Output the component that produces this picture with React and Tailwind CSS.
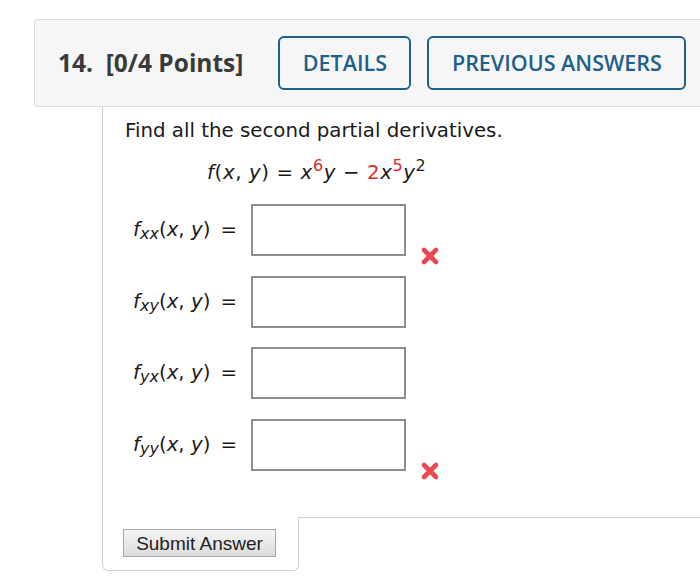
import React from 'react';

const math = { fontFamily: '"DejaVu Sans", Verdana, sans-serif' };

function CrossMark() {
  return (
    <svg width="20" height="20" viewBox="0 0 20 20" className="shrink-0">
      <path d="M4 4 L16 16 M16 4 L4 16" stroke="#ea4750" strokeWidth="4.6" strokeLinecap="round" />
    </svg>
  );
}

function Label({ sub }) {
  return (
    <span className="whitespace-nowrap">
      <i>f</i>
      <sub className="text-[16px] italic relative top-[3px]">{sub}</sub>
      (<i>x</i>, <i>y</i>)
    </span>
  );
}

function Row({ sub, wrong }) {
  return (
    <div className="flex items-center">
      <div className="w-[118px] flex items-center pr-[14px]">
        <Label sub={sub} />
        <span className="ml-auto">=</span>
      </div>
      <div className="w-[155px] h-[52px] border-2 border-[#8e8e8e] bg-white" />
      {wrong && (
        <div className="self-end mb-[-10px] ml-[14px]">
          <CrossMark />
        </div>
      )}
    </div>
  );
}

export default function App() {
  const red = 'text-[#dc2b2b]';
  return (
    <div className="w-[700px] h-[583px] overflow-hidden bg-white">
      <div className="pt-[19px] pl-[34px]">
        <div
          className="w-[700px] h-[88px] bg-[#f6f6f6] border border-[#dcdcdc] rounded-[3px] flex items-center pl-[23px]"
          style={{ fontFamily: '"Open Sans", sans-serif' }}
        >
          <span className="text-[24.5px] font-bold text-[#3a3a3a] whitespace-nowrap">
            14.&nbsp;&nbsp;[0/4 Points]
          </span>
          <button className="ml-[35px] h-[54px] w-[133px] border-2 border-[#1f5f8b] rounded-[6px] text-[#1f5f8b] text-[21.5px] font-semibold">
            DETAILS
          </button>
          <button className="ml-[16px] h-[54px] w-[259px] border-2 border-[#1f5f8b] rounded-[6px] text-[#1f5f8b] text-[21.5px] font-semibold">
            PREVIOUS ANSWERS
          </button>
        </div>
      </div>

      <div className="ml-[102px] text-[19.8px] text-[#1a1a1a]" style={math}>
        <div className="border-l border-[#cfcfcf] pl-[22px] pt-[12px] pb-[46px]">
          <p className="leading-[24px]">Find all the second partial derivatives.</p>
          <p className="leading-[24px] mt-[18px] pl-[82px] whitespace-nowrap tracking-[0.6px]">
            <i>f</i>(<i>x</i>, <i>y</i>) = <i>x</i>
            <sup className={`text-[16px] ${red}`}>6</sup>
            <i>y</i> − <span className={red}>2</span>
            <i>x</i>
            <sup className={`text-[16px] ${red}`}>5</sup>
            <i>y</i>
            <sup className="text-[16px]">2</sup>
          </p>
          <div className="mt-[19px] pl-[8px] flex flex-col gap-[19.5px]">
            <Row sub="xx" wrong />
            <Row sub="xy" />
            <Row sub="yx" />
            <Row sub="yy" wrong />
          </div>
        </div>
        <div className="flex">
          <div className="w-[197px] border-l border-r border-b border-[#cfcfcf] rounded-b-[6px] pl-[20px] pt-[12px] pb-[12px]">
            <button
              className="w-[153px] h-[28px] border border-[#a9a9a9] bg-gradient-to-b from-[#f5f5f5] to-[#dcdcdc] text-[19px] text-[#222] leading-none"
              style={{ fontFamily: '"Liberation Sans", Arial, sans-serif' }}
            >
              Submit Answer
            </button>
          </div>
          <div className="flex-1 border-t border-[#cfcfcf]" />
        </div>
      </div>
    </div>
  );
}
